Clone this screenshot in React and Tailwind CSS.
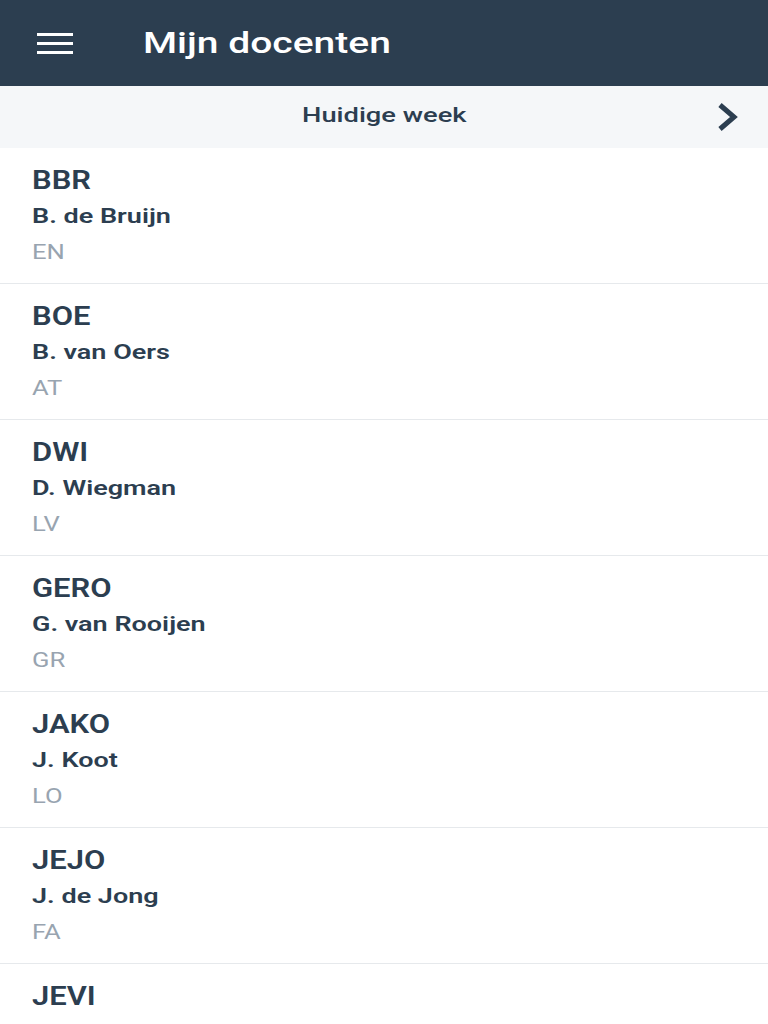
import { useState } from "react";

const teachers = [
    { code: "BBR", name: "B. de Bruijn", subject: "EN" },
    { code: "BOE", name: "B. van Oers", subject: "AT" },
    { code: "DWI", name: "D. Wiegman", subject: "LV" },
    { code: "GERO", name: "G. van Rooijen", subject: "GR" },
    { code: "JAKO", name: "J. Koot", subject: "LO" },
    { code: "JEJO", name: "J. de Jong", subject: "FA" },
    { code: "JEVI", name: "J. Vink", subject: "NE" },
];

export default function App() {
    const [week, setWeek] = useState(0);

    return (
        <div className="min-h-screen bg-white font-['Roboto',sans-serif] text-[#2c3e50]">
            {/* Toolbar */}
            <header className="h-[86px] bg-[#2c3e50] flex items-center">
                <button className="ml-[37px] w-[36px] flex flex-col gap-[6px]">
                    <span className="block h-[3px] bg-white"></span>
                    <span className="block h-[3px] bg-white"></span>
                    <span className="block h-[3px] bg-white"></span>
                </button>
                <h1 className="ml-[70px] text-[30px] font-medium text-white leading-none">
                    <span className="inline-block origin-left scale-x-[1.3]">
                        Mijn docenten
                    </span>
                </h1>
            </header>

            {/* Week switcher */}
            <div className="h-[62px] bg-[#f5f7f9] relative flex items-center justify-center pb-[2px]">
                <span className="inline-block scale-x-[1.3] text-[21px] font-medium">
                    {week === 0 ? "Huidige week" : "Volgende week"}
                </span>
                <button
                    onClick={() => setWeek(week === 0 ? 1 : 0)}
                    className="absolute right-[26px] top-[16px]"
                >
                    <svg width="28" height="30" viewBox="0 0 28 30" fill="none">
                        <path
                            d="M6 3 L20 15 L6 27"
                            stroke="#2c3e50"
                            strokeWidth="5"
                        />
                    </svg>
                </button>
            </div>

            {/* List */}
            <ul>
                {teachers.map((t) => (
                    <li
                        key={t.code}
                        className="px-[32px] pt-[14px] pb-[13px] border-b border-[#e6e9ec]"
                    >
                        <div className="text-[26px] font-semibold leading-[36px]">
                            <span className="inline-block origin-left scale-x-[1.19]">
                                {t.code}
                            </span>
                        </div>
                        <div className="text-[20px] font-semibold leading-[36px]">
                            <span className="inline-block origin-left scale-x-[1.35]">
                                {t.name}
                            </span>
                        </div>
                        <div className="text-[21px] leading-[36px] text-[#98a4b0]">
                            <span className="inline-block origin-left scale-x-[1.22]">
                                {t.subject}
                            </span>
                        </div>
                    </li>
                ))}
            </ul>
        </div>
    );
}
